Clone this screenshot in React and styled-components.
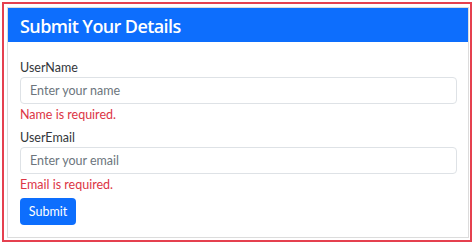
import React from "react";
import styled, { createGlobalStyle } from "styled-components";

const Global = createGlobalStyle`
  html, body { margin: 0; padding: 0; background: #fff; }
  body { font-family: "Lato", "Noto Sans", sans-serif; }
  * { box-sizing: border-box; }
`;

const Frame = styled.div`
  margin: 2px;
  width: 470px;
  height: 240px;
  border: 2px solid #e5404f;
  padding: 3px 1px 2px 3px;
`;

const Card = styled.div`
  height: 100%;
  border: 1px solid #dcdcdc;
  display: flex;
  flex-direction: column;
`;

const Header = styled.div`
  background: #0d6efd;
  height: 34px;
  display: flex;
  align-items: center;
  padding-left: 12px;
  padding-top: 1px;
  color: #fff;
  font-family: "Open Sans", "Noto Sans", sans-serif;
  font-size: 18px;
  font-weight: 600;
  letter-spacing: -0.6px;
`;

const Body = styled.form`
  padding: 19px 11px 0 12px;
  display: flex;
  flex-direction: column;
`;

const Field = styled.div`
  display: flex;
  flex-direction: column;
  margin-bottom: ${(p) => p.$mb}px;
`;

const Label = styled.label`
  font-size: 12.5px;
  color: #33373b;
  line-height: 14px;
  margin-bottom: 2px;
`;

const Input = styled.input`
  height: 27px;
  border: 1px solid #dee2e6;
  border-radius: 4px;
  padding: 0 9px;
  font-family: inherit;
  font-size: 12.5px;
  color: #212529;
  outline: none;
  &::placeholder { color: #6c757d; }
`;

const Error = styled.div`
  color: #dc3545;
  font-size: 12.5px;
  line-height: 16px;
  margin-top: 3px;
`;

const Button = styled.button`
  align-self: flex-start;
  background: #0d6efd;
  color: #fff;
  border: none;
  border-radius: 4px;
  height: 27px;
  width: 56px;
  padding: 0;
  font-family: inherit;
  font-size: 12.5px;
`;

export default function App() {
  return (
    <>
      <Global />
      <Frame>
        <Card>
          <Header>Submit Your Details</Header>
          <Body onSubmit={(e) => e.preventDefault()}>
            <Field $mb={8}>
              <Label>UserName</Label>
              <Input placeholder="Enter your name" />
              <Error>Name is required.</Error>
            </Field>
            <Field $mb={5}>
              <Label>UserEmail</Label>
              <Input placeholder="Enter your email" />
              <Error>Email is required.</Error>
            </Field>
            <Button type="submit">Submit</Button>
          </Body>
        </Card>
      </Frame>
    </>
  );
}
